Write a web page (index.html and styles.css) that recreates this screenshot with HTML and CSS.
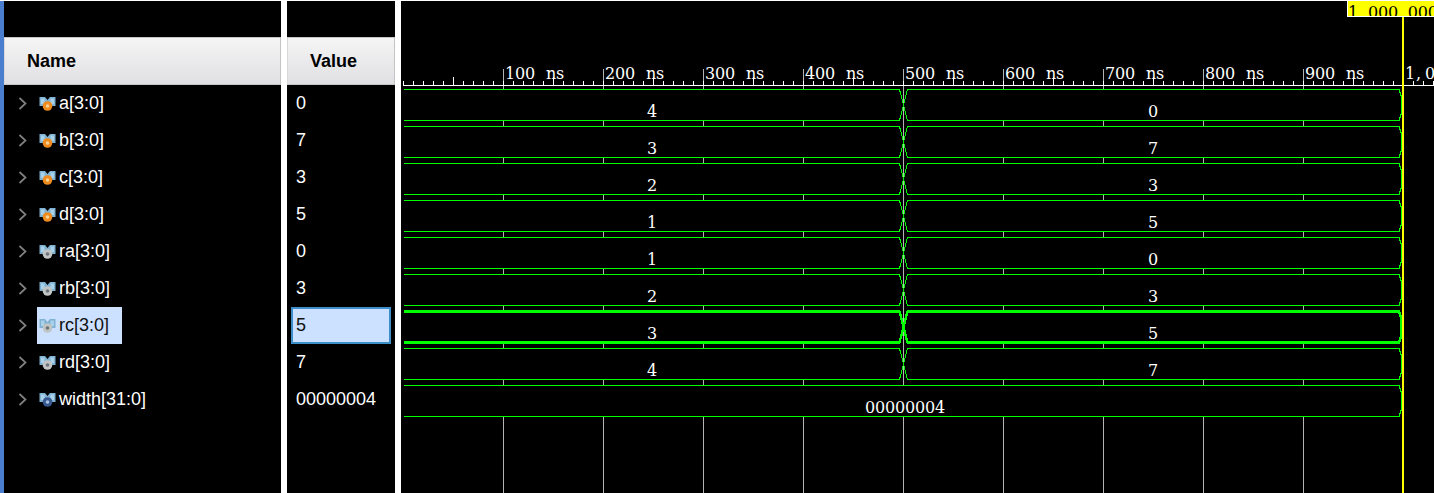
FILE: index.html
```html
<!DOCTYPE html>
<html lang="en">
<head>
<meta charset="utf-8">
<title>Waveform</title>
<link rel="stylesheet" href="styles.css">
</head>
<body>
<svg class="defs" width="0" height="0" aria-hidden="true">
  <defs>
    <symbol id="chev" viewBox="0 0 9 13"><path d="M1.5 1 L7.5 6.5 L1.5 12" fill="none" stroke="#808080" stroke-width="1.7"/></symbol>
    <symbol id="sig" viewBox="0 0 17 16">
      <path d="M0.5 1 H6 L8.5 4 L11 1 H16.5 V10 H0.5 Z" fill="#7fb2d2"/>
      <path d="M2 2.5 H5.5 V8 H2 Z M11.5 2.5 H15 V8 H11.5 Z" fill="#a9d2ea"/>
      <circle cx="8.5" cy="10" r="4.8" fill="currentColor"/>
      <circle cx="8.5" cy="10" r="1.8" fill="var(--dot)"/>
    </symbol>
  </defs>
</svg>
<main class="app">
  <div class="strip"></div>
  <section class="col names">
    <div class="spacer"></div>
    <div class="head">Name</div>
    <div class="row"><svg class="chev"><use href="#chev"/></svg><svg class="icon in"><use href="#sig"/></svg><span>a[3:0]</span></div>
    <div class="row"><svg class="chev"><use href="#chev"/></svg><svg class="icon in"><use href="#sig"/></svg><span>b[3:0]</span></div>
    <div class="row"><svg class="chev"><use href="#chev"/></svg><svg class="icon in"><use href="#sig"/></svg><span>c[3:0]</span></div>
    <div class="row"><svg class="chev"><use href="#chev"/></svg><svg class="icon in"><use href="#sig"/></svg><span>d[3:0]</span></div>
    <div class="row"><svg class="chev"><use href="#chev"/></svg><svg class="icon out"><use href="#sig"/></svg><span>ra[3:0]</span></div>
    <div class="row"><svg class="chev"><use href="#chev"/></svg><svg class="icon out"><use href="#sig"/></svg><span>rb[3:0]</span></div>
    <div class="row"><svg class="chev"><use href="#chev"/></svg><div class="sel"><svg class="icon out"><use href="#sig"/></svg><span>rc[3:0]</span></div></div>
    <div class="row"><svg class="chev"><use href="#chev"/></svg><svg class="icon out"><use href="#sig"/></svg><span>rd[3:0]</span></div>
    <div class="row"><svg class="chev"><use href="#chev"/></svg><svg class="icon par"><use href="#sig"/></svg><span>width[31:0]</span></div>
  </section>
  <section class="col values">
    <div class="spacer"></div>
    <div class="head center">Value</div>
    <div class="row val">0</div>
    <div class="row val">7</div>
    <div class="row val">3</div>
    <div class="row val">5</div>
    <div class="row val">0</div>
    <div class="row val">3</div>
    <div class="row val"><div class="valsel">5</div></div>
    <div class="row val">7</div>
    <div class="row val">00000004</div>
  </section>
  <section class="wave">
    <svg class="canvas" viewBox="401 1 1033 492" width="1033" height="492">
      <defs>
        <pattern id="ticks" x="403" y="81" width="10" height="5" patternUnits="userSpaceOnUse"><rect x="0" y="0" width="1" height="5" fill="#fff"/></pattern>
        <pattern id="mids" x="453" y="77" width="100" height="9" patternUnits="userSpaceOnUse"><rect x="0" y="0" width="1" height="9" fill="#fff"/></pattern>
        <g id="bus"><rect x="403" y="89" width="999" height="32" fill="#000"/></g>
        <path id="edge" d="M404 89.5 H899.5 L903.5 105 L907.5 89.5 H1399 L1401.5 97 V113 L1399 120.5 H907.5 L903.5 105 L899.5 120.5 H404"/>
        <path id="flat" d="M404 89.5 H1399 L1401.5 97 V113 L1399 120.5 H404"/>
      </defs>

      <!-- grid -->
      <g class="grid">
        <rect x="503" y="69" width="1" height="424"/><rect x="603" y="69" width="1" height="424"/>
        <rect x="703" y="69" width="1" height="424"/><rect x="803" y="69" width="1" height="424"/>
        <rect x="903" y="69" width="1" height="424"/><rect x="1003" y="69" width="1" height="424"/>
        <rect x="1103" y="69" width="1" height="424"/><rect x="1203" y="69" width="1" height="424"/>
        <rect x="1303" y="69" width="1" height="424"/><rect x="1403" y="69" width="1" height="424"/>
      </g>

      <!-- row interiors hide the grid -->
      <use href="#bus"/><use href="#bus" y="37"/><use href="#bus" y="74"/><use href="#bus" y="111"/>
      <use href="#bus" y="148"/><use href="#bus" y="185"/><use href="#bus" y="222"/><use href="#bus" y="259"/><use href="#bus" y="296"/>
      <rect class="gline" x="903" y="85" width="1" height="296"/>

      <!-- ruler -->
      <rect x="403" y="85" width="1031" height="1" fill="#fff"/>
      <rect x="403" y="81" width="1031" height="5" fill="url(#ticks)"/>
      <rect x="453" y="77" width="981" height="9" fill="url(#mids)"/>
      <g class="ruler">
        <text x="505" y="79">100 ns</text><text x="605" y="79">200 ns</text><text x="705" y="79">300 ns</text>
        <text x="805" y="79">400 ns</text><text x="905" y="79">500 ns</text><text x="1005" y="79">600 ns</text>
        <text x="1105" y="79">700 ns</text><text x="1205" y="79">800 ns</text><text x="1305" y="79">900 ns</text>
        <text x="1405" y="79">1<tspan dx="1">,</tspan><tspan dx="4">000 ns</tspan></text>
      </g>

      <!-- signals -->
      <g class="trace">
        <use href="#edge"/><use href="#edge" y="37"/><use href="#edge" y="74"/><use href="#edge" y="111"/>
        <use href="#edge" y="148"/><use href="#edge" y="185"/>
        <use href="#edge" y="222" class="thick"/>
        <use href="#edge" y="259"/><use href="#flat" y="296"/>
      </g>
      <g class="vals">
        <text x="652" y="117">4</text><text x="1153" y="117">0</text>
        <text x="652" y="154">3</text><text x="1153" y="154">7</text>
        <text x="652" y="191">2</text><text x="1153" y="191">3</text>
        <text x="652" y="228">1</text><text x="1153" y="228">5</text>
        <text x="652" y="265">1</text><text x="1153" y="265">0</text>
        <text x="652" y="302">2</text><text x="1153" y="302">3</text>
        <text x="652" y="339">3</text><text x="1153" y="339">5</text>
        <text x="652" y="376">4</text><text x="1153" y="376">7</text>
        <text x="905" y="413">00000004</text>
      </g>

      <!-- cursor -->
      <rect x="1402" y="17" width="2" height="476" fill="#ff0"/>
      <rect x="1347" y="1" width="87" height="16" fill="#fff"/>
      <svg x="1348" y="1" width="86" height="15" viewBox="1348 1 86 15">
        <rect x="1348" y="1" width="86" height="15" fill="#ff0"/>
        <text class="cursor-label" x="1348" y="18">1<tspan dx="1">,</tspan><tspan dx="4">000</tspan><tspan dx="1">.</tspan><tspan dx="4">000 ns</tspan></text>
      </svg>
    </svg>
  </section>
</main>
</body>
</html>
```
FILE: styles.css
```css
html, body { margin: 0; padding: 0; height: 100%; background: #fff; overflow: hidden; }
.defs { position: absolute; }
.app {
  display: flex;
  height: 492px;
  margin-top: 1px;
  font-family: "Liberation Sans", Arial, sans-serif;
  font-size: 18px;
  color: #fff;
}
.strip { width: 4px; background: #4a7fd0; }
.col { background: #000; display: flex; flex-direction: column; }
.names { width: 277px; margin-right: 6px; }
.values { width: 108px; margin-right: 6px; }
.spacer { height: 36px; flex: none; }
.head {
  height: 48px;
  flex: none;
  box-sizing: border-box;
  border: 1px solid #c4c4c4;
  border-left-color: #d8d8d8;
  background: linear-gradient(#f5f5f5, #e0e0e4);
  color: #000;
  font-weight: 700;
  display: flex;
  align-items: center;
  padding-left: 22px;
}
.center { padding-left: 22px; }
.names .row span { margin-left: -1px; }
.row {
  height: 37px;
  flex: none;
  display: flex;
  align-items: center;
}
.chev { width: 9px; height: 13px; margin-left: 14px; margin-right: 12px; flex: none; }
.icon { width: 17px; height: 16px; margin-right: 4px; flex: none; }
.sel { display: flex; align-items: center; height: 37px; background: #cce0ff; color: #111; padding-right: 13px; margin-left: -2px; padding-left: 2px; }
.in { color: #ee8a1e; --dot: #f8d090; }
.out { color: #c0c4c4; --dot: #6e7478; }
.par { color: #37598f; --dot: #a8c0e0; }
.val { padding-left: 9px; }
.valsel {
  box-sizing: border-box;
  width: 100px;
  height: 37px;
  margin-left: -5px;
  padding-left: 3px;
  display: flex;
  align-items: center;
  background: #cce0ff;
  border: 2px solid #3d8fc9;
  color: #111;
}
.wave { flex: 1; background: #000; overflow: hidden; }
.canvas { display: block; }
.grid rect, .gline { fill: #b4b4b4; }
.ruler text, .vals text {
  font-family: "DejaVu Serif", serif;
  font-size: 16px;
  letter-spacing: -0.18px;
  word-spacing: 6px;
  fill: #fff;
}
.vals text { text-anchor: middle; }
.cursor-label {
  font-family: "DejaVu Serif", serif;
  font-size: 16px;
  letter-spacing: -0.18px;
  word-spacing: 6px;
  fill: #000;
}
.trace { fill: none; stroke: #0f0; stroke-width: 1; shape-rendering: crispEdges; }
.thick { stroke-width: 2.4; }
```
